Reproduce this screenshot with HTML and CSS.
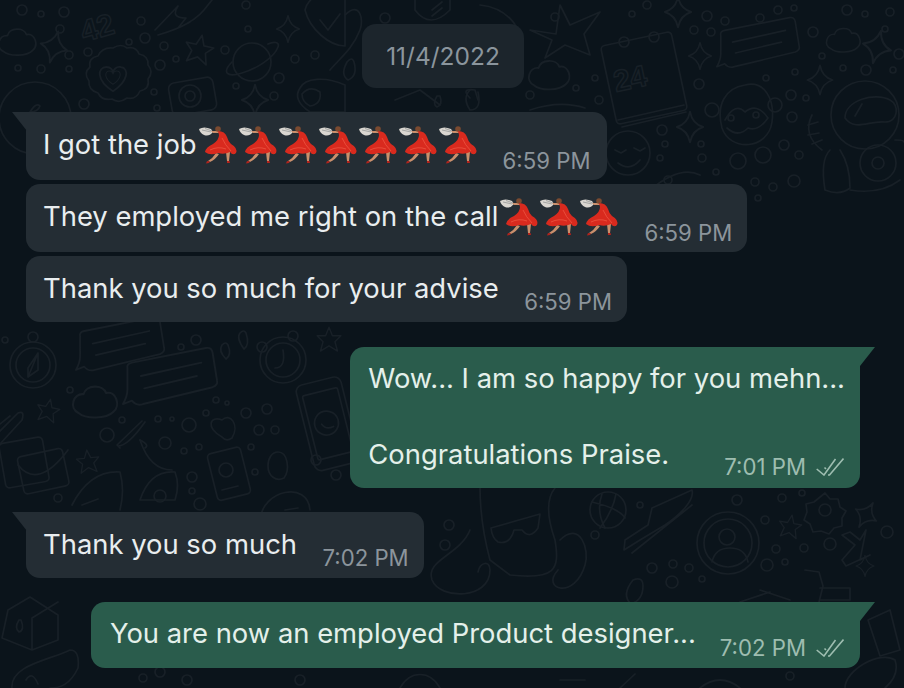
FILE: index.html
```html
<!DOCTYPE html>
<html lang="en">
<head>
<meta charset="utf-8">
<title>Chat</title>
<link rel="stylesheet" href="styles.css">
</head>
<body>
<svg class="doodles" width="904" height="688" viewBox="0 0 904 688" aria-hidden="true">
  <defs>
    <path id="star" d="M0-15 L4-5 L14-5 L7 2 L10 13 L0 7 L-10 13 L-7 2 L-14-5 L-4-5Z"/>
    <path id="spark" d="M0-14 Q2-3 12 0 Q2 3 0 14 Q-2 3-12 0 Q-2-3 0-14Z"/>
    <path id="cloud" d="M-14 8 C-22 4-18-8-10-7 C-8-15 6-15 8-8 C16-10 20 2 14 7 C8 13-8 13-14 8Z"/>
    <path id="heart" d="M0 12 C-16 2-14-10-6-10 C-2-10 0-7 0-5 C0-7 3-11 7-10 C15-9 14 3 0 12Z"/>
    <g id="chat">
      <path d="M-38-15 Q-39-19-34-20 L32-33 Q37-34 38-29 L42-4 Q43 0 38 2 L-24 17 Q-30 19-34 14 L-42 17 Q-38 10-38 4Z"/>
      <path d="M-26-8 L28-20 M-23 3 L24-8"/>
    </g>
    <g id="clock">
      <circle r="23"/><circle r="17"/><circle cy="-28" r="5"/>
    </g>
  </defs>
  <g class="doodle">
    <!-- top left -->
    <use href="#cloud" transform="translate(18 43) scale(1.05)"/>
    <use href="#spark" transform="translate(54 47) rotate(15) scale(1.15)"/>
    <text class="glyph" transform="translate(84 42) rotate(-16)">42</text>
    <path d="M113 48 q8-5 14 0 q9-2 12 6 q10 2 9 11 q6 7 0 14 q2 10-8 12 q-4 9-13 7 q-8 6-15 1 q-10 2-14-6 q-10-3-9-12 q-6-8 1-14 q-2-9 8-11 q4-9 15-8Z"/>
    <use href="#heart" transform="translate(113 78) scale(1.1)"/>
    <use href="#heart" transform="translate(113 77) scale(.6)"/>
    <path d="M155 30 L178 6 Q170 18 186 18 L178 28 Q196 20 204 10 L212 0 M158 35 Q176 30 190 22"/>
    <use href="#star" transform="translate(199 50) rotate(12)"/>
    <circle cx="252" cy="62" r="19"/><path d="M232 62 C222 72 226 78 242 73 C256 69 274 58 278 47 C280 42 274 41 268 44"/>
    <rect x="170" y="80" width="45" height="33" rx="6" transform="rotate(-10 192 96)"/><circle cx="190" cy="96" r="11"/><circle cx="190" cy="96" r="5"/>
    <use href="#spark" transform="translate(255 100) scale(1.1)"/>
    <use href="#spark" transform="translate(288 29) scale(.95)"/>
    <path d="M305 10 C310-10 340-14 345 0 V46 C330 46 310 30 305 10Z"/><path d="M320 20 L328 30 L340 14"/>
    <path d="M300 88 C305 78 325 76 345 85 L345 112 L310 112 Q292 100 300 88Z"/><path d="M302 94 Q310 85 320 92 Q322 104 310 106 Q302 102 302 94Z"/>
    <circle cx="35" cy="118" r="36"/><path d="M30 112 Q36 102 40 106 Q38 112 30 112Z"/>
    <!-- top middle -->
    <path d="M345 15 C360 0 364 20 360 30 C352 50 340 58 330 70"/><path d="M480 5 C508 8 528 30 520 60 C500 68 480 56 470 40"/>
    <path d="M415 -5 V10 Q430 30 450 10 V-5"/><path d="M432 10 l10-8 M432 16 l10-8"/>
    <path d="M530 30 L556 34 L560 5 L570 25 L600 12 L584 34 L590 55 L565 45 L545 58 L552 40Z"/>
    <use href="#cloud" transform="translate(550 76) scale(1.15)"/>
    <path d="M347 62 Q340 75 348 80 Q358 76 354 62 Q352 56 347 62Z"/><path d="M470 98 Q460 88 475 90 L478 100"/>
    <path d="M437 96 q-5 8 0 11 q6-2 3-11Z"/><path d="M470 90 q-8 8 0 20 q12 0 8-18"/>
    <path d="M395 100 L420 90 L440 105"/><path d="M530 110 Q560 100 585 108"/>
    <!-- top right -->
    <rect x="608" y="38" width="72" height="80" rx="4" transform="rotate(-12 644 78)"/><path d="M618 120 L684 105 M622 127 L686 112"/>
    <circle cx="624" cy="42" r="5"/><circle cx="654" cy="37" r="5"/>
    <text class="glyph" transform="translate(616 92) rotate(-12)">24</text>
    <use href="#chat" transform="translate(758 50) scale(.98)"/>
    <use href="#spark" transform="translate(700 56) scale(.95)"/>
    <use href="#spark" transform="translate(678 12) scale(1.1)"/>
    <use href="#spark" transform="translate(690 127) scale(1.1)"/>
    <use href="#spark" transform="translate(820 80) scale(1.05)"/>
    <use href="#spark" transform="translate(877 47) rotate(14) scale(1.2)"/>
    <use href="#cloud" transform="translate(844 41) scale(.95)"/>
    <path d="M745 85 C765 80 775 100 772 122 C768 150 730 152 722 128 C716 105 725 88 745 85Z"/>
    <circle cx="712" cy="110" r="7"/><circle cx="775" cy="105" r="7"/>
    <path d="M725 120 Q735 102 745 112 Q757 102 768 118 Q758 132 748 128 Q738 138 727 128"/>
    <circle cx="731" cy="118" r="3"/><circle cx="756" cy="115" r="3"/>
    <circle cx="738" cy="161" r="8"/><circle cx="763" cy="155" r="8"/>
    <circle cx="628" cy="153" r="22"/><path d="M615 150 l6 3 l5-3 M634 148 l6 3 l5-3 M618 163 Q630 172 640 160"/>
    <circle cx="865" cy="115" r="34"/><path d="M845 118 C845 100 875 92 890 100 C900 105 898 122 885 122 C870 120 855 132 845 118Z"/><path d="M855 116 L862 104"/>
    <path d="M812 115 q-10 20 10 35"/><path d="M808 125 L818 122 M808 135 L819 133 M812 144 L822 140"/>
    <path d="M830 150 Q820 160 825 190 Q840 196 850 188 Q850 165 840 150"/>
    <circle cx="878" cy="163" r="18"/><circle cx="878" cy="163" r="6"/><path d="M850 190 Q880 195 900 180 M895 140 Q904 140 904 142"/>
    <path d="M650 190 Q680 165 700 175"/><circle cx="668" cy="180" r="4"/>
    <!-- left middle -->
    <use href="#clock" transform="translate(33 365)"/><path d="M38 353 L28 377 L28 368 Z M38 353 L38 370 L28 377"/>
    <use href="#chat" transform="translate(120 352) scale(1.05)"/>
    <use href="#chat" transform="translate(170 385) rotate(0) scale(1.12)"/>
    <use href="#cloud" transform="translate(96 403) scale(1.25)"/>
    <use href="#star" transform="translate(48 411) rotate(12) scale(.8)"/>
    <path d="M-5 436 L18 413 Q25 410 22 420 L0 444 M-5 428 L10 416"/>
    <rect x="2" y="440" width="44" height="45" rx="4" transform="rotate(-10 24 462)"/>
    <rect x="20" y="452" width="46" height="38" rx="4" transform="rotate(-12 44 470)"/><path d="M18 465 Q38 490 68 450"/>
    <use href="#star" transform="translate(88 462) rotate(-6) scale(.8)"/>
    <path d="M117 445 L142 421 M120 448 L118 446 Q128 446 145 422 M140 440 Q150 470 172 470"/><path d="M140 440 Q150 445 145 448"/>
    <path d="M72 505 Q90 470 120 472 Q125 490 120 510"/><path d="M82 505 l16-6"/>
    <path d="M140 500 Q150 470 175 472 Q180 485 175 500 Z"/><circle cx="160" cy="496" r="6"/>
    <circle cx="107" cy="435" r="7"/><circle cx="165" cy="443" r="6"/><circle cx="189" cy="425" r="7"/>
    <path d="M222 437 C205 428 210 415 222 420 C230 412 240 425 232 438 Q226 442 222 437Z"/>
    <circle cx="283" cy="360" r="23"/><circle cx="283" cy="360" r="17"/><circle cx="293" cy="336" r="5"/><circle cx="262" cy="347" r="5"/><path d="M283 350 Q286 368 275 368"/>
    <path d="M222 345 q-4 6 4 14 q6-4 2-14 q-2-4-6 0Z M240 333 q-4 5 4 16 q6-4 2-16 q-2-4-6 0Z"/>
    <use href="#star" transform="translate(329 340) scale(.85)"/>
    <g transform="translate(327 425) rotate(-14)"><rect x="-22" y="-45" width="46" height="88" rx="7"/><rect x="-17" y="-34" width="36" height="66" rx="2"/><circle cy="-2" r="12"/><path d="M-5-2 Q-2 5 6 3"/></g>
    <rect x="212" y="450" width="34" height="48" rx="4" transform="rotate(-14 228 474)"/><circle cx="226" cy="470" r="7"/><path d="M222 490 L238 486"/>
    <path d="M278 452 C288 452 290 470 284 478 C276 482 268 476 268 466 C268 458 272 452 278 452Z"/>
    <path d="M260 520 C262 490 308 480 310 510"/><path d="M285 510 L298 508"/>
    <circle cx="316" cy="460" r="5"/><circle cx="336" cy="475" r="5"/>
    <!-- lower right -->
    <path d="M480 487 C480 505 482 530 490 560 L510 575 C555 580 560 570 555 540 C548 520 545 500 555 488"/>
    <path d="M491 528 L540 514 L538 528 Q530 540 522 530 L514 530 Q510 545 498 542 Q492 538 491 528Z"/>
    <path d="M470 530 C460 555 425 560 432 580 C440 600 490 600 490 570 C490 560 480 562 478 572"/>
    <path d="M560 540 C580 520 590 550 585 565 C575 600 540 590 558 570"/>
    <circle cx="608" cy="510" r="18"/><path d="M592 502 C605 505 620 510 625 518 M602 494 C598 505 598 515 605 528 M616 494 C614 505 610 515 600 528"/>
    <path d="M624 550 L640 540 L665 525 C680 515 695 500 692 490 L652 508 L648 525 L625 540Z M632 553 L692 505"/>
    <circle cx="728" cy="543" r="31"/><circle cx="728" cy="543" r="24"/><circle cx="727" cy="537" r="8"/><path d="M712 562 Q715 548 730 548 Q745 548 748 562"/>
    <use href="#star" transform="translate(790 527) rotate(10) scale(.8)"/>
    <path d="M825 493 l5 6 l8 0 l2 8 l6 4 l-4 7 l0 8 l-8 2 l-5 6 l-8-3 l-8 1 l-3-8 l-6-4 l3-8 l-1-8 l8-2Z"/><circle cx="825" cy="510" r="6"/>
    <use href="#spark" transform="translate(866 515) rotate(30)"/>
    <use href="#spark" transform="translate(865 566) scale(.75)"/>
    <path d="M842 560 L855 545 L842 535 L850 532 L860 540 L866 530 L860 560 L870 555 L846 566Z"/>
    <path d="M633 580 q-12 15-2 24 q12-4 12-18 q0-10-10-6Z"/><path d="M760 590 L790 600 M740 602 L770 592"/>
    <path d="M805 570 l14 2 l4 14 l-4 16 M820 600 h30 v-12 h-30"/>
    <!-- bottom -->
    <path d="M8 610 L30 597 L58 615 V640 L32 650 L2 638Z M32 618 V650 M32 618 L58 602"/><path d="M19 620 q-5 8 0 12 q6-2 2-12Z"/>
    <path d="M12 688 C10 665 50 660 70 650 Q80 650 78 668 C70 685 60 688 50 688 M26 680 Q32 670 38 684"/>
    <path d="M845 688 C845 670 880 650 895 660 Q900 675 885 688"/><path d="M868 620 L890 610 L900 650 L880 656Z"/>
    <path d="M400 688 C410 670 430 670 440 688 M560 680 h25 M620 688 l15-14 M700 688 q20-16 40 0"/>
    <circle cx="143" cy="678" r="4"/><circle cx="160" cy="672" r="5"/><circle cx="187" cy="680" r="5"/><circle cx="300" cy="680" r="5"/><circle cx="790" cy="676" r="4"/>
    <g>
      <circle cx="22" cy="10" r="5"/><circle cx="41" cy="14" r="3"/><circle cx="64" cy="12" r="5"/><circle cx="60" cy="29" r="4"/><circle cx="69" cy="55" r="4"/><circle cx="18" cy="68" r="3"/><circle cx="41" cy="69" r="4"/><circle cx="69" cy="69" r="3"/><circle cx="88" cy="52" r="4"/><circle cx="141" cy="21" r="4"/><circle cx="129" cy="42" r="3"/><circle cx="145" cy="38" r="5"/><circle cx="164" cy="46" r="4"/><circle cx="160" cy="65" r="5"/><circle cx="176" cy="59" r="3"/><circle cx="154" cy="92" r="3"/><circle cx="84" cy="104" r="5"/><circle cx="157" cy="108" r="3"/><circle cx="225" cy="50" r="4"/><circle cx="295" cy="59" r="4"/><circle cx="315" cy="55" r="4"/><circle cx="236" cy="86" r="3"/><circle cx="279" cy="78" r="5"/><circle cx="274" cy="96" r="4"/><circle cx="246" cy="5" r="4"/><circle cx="248" cy="29" r="3"/>
      <circle cx="385" cy="18" r="5"/><circle cx="555" cy="17" r="4"/><circle cx="530" cy="95" r="4"/><circle cx="595" cy="78" r="3"/><circle cx="576" cy="88" r="3"/><circle cx="599" cy="100" r="4"/>
      <circle cx="647" cy="5" r="4"/><circle cx="632" cy="14" r="3"/><circle cx="707" cy="16" r="5"/><circle cx="725" cy="21" r="4"/><circle cx="760" cy="18" r="4"/><circle cx="778" cy="10" r="4"/><circle cx="794" cy="8" r="3"/><circle cx="847" cy="10" r="5"/><circle cx="865" cy="14" r="3"/><circle cx="890" cy="12" r="4"/><circle cx="694" cy="30" r="4"/><circle cx="711" cy="32" r="4"/><circle cx="813" cy="32" r="5"/><circle cx="899" cy="54" r="5"/><circle cx="885" cy="29" r="3"/><circle cx="822" cy="56" r="3"/><circle cx="843" cy="68" r="3"/><circle cx="866" cy="70" r="5"/><circle cx="893" cy="70" r="3"/><circle cx="795" cy="72" r="3"/><circle cx="766" cy="78" r="3"/><circle cx="699" cy="84" r="5"/><circle cx="791" cy="95" r="5"/><circle cx="806" cy="98" r="3"/><circle cx="792" cy="117" r="5"/><circle cx="784" cy="145" r="5"/><circle cx="799" cy="155" r="4"/><circle cx="662" cy="130" r="5"/><circle cx="665" cy="144" r="3"/><circle cx="701" cy="144" r="3"/><circle cx="660" cy="158" r="3"/><circle cx="702" cy="158" r="4"/><circle cx="716" cy="172" r="3"/><circle cx="755" cy="182" r="4"/><circle cx="773" cy="187" r="4"/><circle cx="794" cy="181" r="6"/><circle cx="758" cy="198" r="3"/>
      <circle cx="5" cy="340" r="3"/><circle cx="70" cy="390" r="3"/><circle cx="122" cy="420" r="3"/><circle cx="196" cy="340" r="5"/><circle cx="181" cy="347" r="3"/><circle cx="158" cy="419" r="3"/><circle cx="172" cy="419" r="2"/><circle cx="216" cy="400" r="3"/><circle cx="227" cy="403" r="2"/><circle cx="206" cy="413" r="3"/><circle cx="246" cy="413" r="5"/><circle cx="267" cy="409" r="5"/><circle cx="259" cy="430" r="5"/><circle cx="275" cy="430" r="4"/><circle cx="184" cy="451" r="3"/><circle cx="199" cy="447" r="3"/><circle cx="251" cy="447" r="3"/><circle cx="255" cy="472" r="3"/><circle cx="192" cy="477" r="5"/><circle cx="192" cy="491" r="3"/><circle cx="200" cy="504" r="6"/><circle cx="58" cy="498" r="4"/>
      <circle cx="449" cy="525" r="5"/><circle cx="445" cy="545" r="5"/><circle cx="595" cy="535" r="4"/><circle cx="640" cy="505" r="3"/><circle cx="652" cy="568" r="5"/><circle cx="673" cy="564" r="4"/><circle cx="689" cy="568" r="4"/><circle cx="702" cy="579" r="3"/><circle cx="672" cy="582" r="6"/><circle cx="737" cy="500" r="5"/><circle cx="782" cy="498" r="4"/><circle cx="802" cy="493" r="3"/><circle cx="765" cy="520" r="4"/><circle cx="776" cy="549" r="4"/><circle cx="804" cy="548" r="4"/><circle cx="767" cy="565" r="6"/><circle cx="785" cy="562" r="3"/><circle cx="830" cy="544" r="6"/><circle cx="887" cy="532" r="6"/>
    </g>
  </g>
</svg>

<svg class="sprites" width="0" height="0" aria-hidden="true">
  <symbol id="dancer" viewBox="0 0 40 40">
    <path class="d-fan" d="M1 3 Q6 0 13 3 L15 6 Q11 11 6 9 Q2 7 1 3Z"/>
    <path class="d-fanline" d="M4 4 L13 6 M7 2.5 L14 5"/>
    <path class="d-skin" d="M18 27 L21 28 Q18 33 12 36 L10 35 Q15 32 18 27Z M28 26 L32 26 L31 35 L29 35Z"/>
    <path class="d-shoe" d="M9 35 L12 35.5 L11 37 L8 37.5Z M29 35 L31.5 35 L32 37 L29 37Z"/>
    <path class="d-skin" d="M13 5 L20 5 L21 7 L15 7Z"/>
    <circle class="d-hair" cx="20" cy="3" r="2.8"/>
    <path class="d-dress" d="M20 5 Q27 5 29 11 Q30 15 33 18 Q40 22 38 27 Q35 30 32 26 Q26 29 20 27 Q12 30 7 26 Q8 21 15 18 Q21 14 21 9Z"/>
    <path class="d-fold" d="M12 24 Q20 20 28 23 M24 12 Q27 19 33 25"/>
  </symbol>
  <symbol id="ticks" viewBox="0 0 28 18">
    <path d="M0.7 11 L8 17 L19.5 1 M12 17 L13.5 17 L27.5 0.6 M8.5 9.5 L10 11"/>
  </symbol>
</svg>

<main class="chat">
  <div class="date">11/4/2022</div>

  <div class="bubble in tail emoji-bubble first">
    <span class="text">I got the job</span>
    <span class="emojis"><svg class="dancer"><use href="#dancer"/></svg><svg class="dancer"><use href="#dancer"/></svg><svg class="dancer"><use href="#dancer"/></svg><svg class="dancer"><use href="#dancer"/></svg><svg class="dancer"><use href="#dancer"/></svg><svg class="dancer"><use href="#dancer"/></svg><svg class="dancer"><use href="#dancer"/></svg></span>
    <span class="meta">6:59 PM</span>
  </div>
  <div class="bubble in emoji-bubble follow">
    <span class="text">They employed me right on the call</span>
    <span class="emojis"><svg class="dancer"><use href="#dancer"/></svg><svg class="dancer"><use href="#dancer"/></svg><svg class="dancer"><use href="#dancer"/></svg></span>
    <span class="meta">6:59 PM</span>
  </div>
  <div class="bubble in follow">
    <span class="text">Thank you so much for your advise</span>
    <span class="meta">6:59 PM</span>
  </div>

  <div class="bubble out tail tall gap-25">
    <div class="stack">
      <div class="text">Wow... I am so happy for you mehn...</div>
      <div class="text">&nbsp;</div>
      <div class="last-row">
        <span class="text">Congratulations Praise.</span>
        <span class="meta">7:01 PM<svg class="ticks"><use href="#ticks"/></svg></span>
      </div>
    </div>
  </div>

  <div class="bubble in tail gap-24">
    <span class="text">Thank you so much</span>
    <span class="meta">7:02 PM</span>
  </div>

  <div class="bubble out tail wide gap-24">
    <span class="text">You are now an employed Product designer...</span>
    <span class="meta">7:02 PM<svg class="ticks"><use href="#ticks"/></svg></span>
  </div>
</main>
</body>
</html>
```
FILE: styles.css
```css
* { box-sizing: border-box; }
html, body { margin: 0; height: 100%; }
body {
  position: relative;
  width: 904px;
  height: 688px;
  overflow: hidden;
  background: #0b141b;
  font-family: Inter, "Liberation Sans", sans-serif;
}
.doodles { position: absolute; left: 0; top: 0; }
.doodle, .doodle use { fill: none; stroke: #182027; stroke-width: 1.7; stroke-linejoin: round; stroke-linecap: round; }
.glyph { font: 700 30px "Liberation Sans", sans-serif; fill: none; stroke: #182027; stroke-width: 1.5; }
.sprites { position: absolute; }
.d-fan { fill: #d9d6d0; }
.d-fanline { fill: none; stroke: #8d8f8f; stroke-width: .7; }
.d-skin { fill: #c98f6c; }
.d-shoe { fill: #b3231c; }
.d-hair { fill: #7a4a30; }
.d-dress { fill: #d92a1e; }
.d-fold { fill: none; stroke: #ef5a46; stroke-width: .7; }

.chat {
  position: relative;
  display: flex;
  flex-direction: column;
  align-items: flex-start;
  height: 100%;
  padding: 24px 44px 0 26px;
}
.date {
  align-self: center;
  width: 162px;
  height: 64px;
  display: flex;
  align-items: center;
  justify-content: center;
  margin-bottom: 24px;
  background: #1c252c;
  border-radius: 14px;
  color: #8b959d;
  font-size: 24.5px;
}
.bubble {
  position: relative;
  display: flex;
  align-items: flex-start;
  padding: 13px 15px 15px 17px;
  border-radius: 14px;
  color: #e9edef;
}
.in { background: #242d34; }
.out {
  align-self: flex-end;
  background: #2a5c4c;
  color: #e4f0ea;
  padding: 12px 16px 16px 18px;
}
.wide { padding-left: 19px; }
.tall { padding: 12px 15px 15px 18px; }
.first { padding-right: 17px; }
.follow { margin-top: 4px; }
.gap-25 { margin-top: 25px; }
.gap-24 { margin-top: 24px; }
.tail.in { border-top-left-radius: 0; }
.tail.out { border-top-right-radius: 0; }
.tail::before {
  content: "";
  position: absolute;
  top: 0;
  width: 15px;
  height: 19px;
}
.tail.in::before {
  left: -14px;
  background: #242d34;
  clip-path: polygon(0 0, 100% 0, 100% 100%);
}
.tail.out::before {
  right: -15px;
  background: #2a5c4c;
  clip-path: polygon(0 0, 100% 0, 0 100%);
}
.text {
  font-size: 27.4px;
  line-height: 38px;
  white-space: nowrap;
}
.emoji-bubble { height: 68px; }
.emojis { display: flex; margin: 1px 0 0 1px; }
.dancer { width: 40px; height: 40px; display: block; }
.meta {
  align-self: flex-end;
  display: flex;
  align-items: center;
  margin-left: 25.5px;
  margin-bottom: -7px;
  color: #8c959c;
  font-size: 22.2px;
  line-height: 24px;
  white-space: nowrap;
}
.emoji-bubble .meta { margin-left: 25px; margin-bottom: -8px; }
.out .meta { color: #9ebdb0; margin-bottom: -8px; margin-left: 24px; }
.ticks {
  width: 28px;
  height: 18px;
  margin-left: 10px;
  fill: none;
  stroke: #9ebdb0;
  stroke-width: 1.6;
}
.stack { display: flex; flex-direction: column; }
.last-row { display: flex; justify-content: space-between; }
.out .last-row .meta { margin-bottom: -6px; margin-right: 1px; }
```
